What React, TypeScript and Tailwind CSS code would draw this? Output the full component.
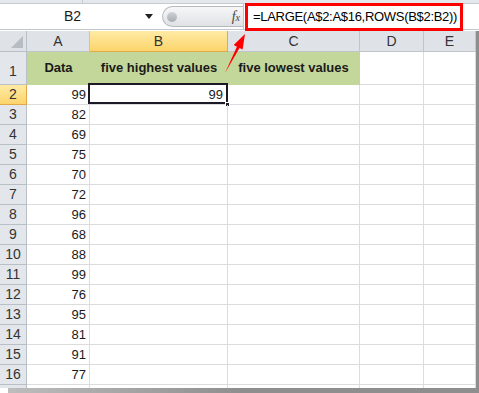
import React from 'react';

const values = [99, 82, 69, 75, 70, 72, 96, 68, 88, 99, 76, 95, 81, 91, 77];

const cols = ['A', 'B', 'C', 'D', 'E'];

const App: React.FC = () => {
  return (
    <div className="relative w-[479px] h-[393px] overflow-hidden bg-white font-['Liberation_Sans',Arial,sans-serif] text-[13px] text-[#1a1a1a]">
      {/* ribbon edge */}
      <div className="h-[4px] bg-[#e4e7eb] border-b border-[#c6cbd1] flex">
        <div className="w-[83px] border-r border-[#c6cbd1]"></div>
      </div>

      {/* Formula bar */}
      <div className="h-[26px] flex border-b border-[#c3c7cc]">
        <div className="w-[162px] flex items-center bg-white">
          <div className="w-[145px] text-center text-[14px]">B2</div>
          <div className="w-0 h-0 border-l-[4px] border-r-[4px] border-t-[5px] border-l-transparent border-r-transparent border-t-[#222]"></div>
        </div>
        <div className="w-[81px] my-[2px] flex items-center rounded-l-full border border-r-0 border-[#b6bac0] bg-gradient-to-b from-[#f7f7f8] to-[#dfe1e4]">
          <div className="ml-[4px] w-[10px] h-[10px] rounded-full bg-gradient-to-b from-[#cfd2d6] to-[#a9adb3]"></div>
          <div className="ml-auto mr-[3px] font-['Liberation_Serif',serif] italic text-[#444] text-[14px] leading-none">
            f<span className="text-[10px]">x</span>
          </div>
        </div>
        <div className="flex-1 flex items-center pl-[9px] border-l border-[#c3c7cc] text-[13px] tracking-[-0.3px] text-black">
          =LARGE(A$2:A$16,ROWS(B$2:B2))
        </div>
      </div>
      <div className="h-[1px] bg-white"></div>

      {/* Sheet */}
      <div className="flex h-[357px]">
        <div className="w-[476px] overflow-hidden">
          <div className="grid grid-cols-[27px_63px_138px_132px_64px_52px]">
            {/* column headers */}
            <div className="h-[21px] bg-[#dfe3e8] border-r border-b border-[#b9bfc7] flex items-end justify-end pr-[3px] pb-[3px]">
              <svg width="12" height="12" viewBox="0 0 12 12">
                <polygon points="12,0 12,12 0,12" fill="#b7bcc2" />
              </svg>
            </div>
            {cols.map((c) => (
              <div
                key={c}
                className={
                  c === 'B'
                    ? 'h-[21px] flex items-center justify-center bg-gradient-to-b from-[#ffeba4] to-[#fbd46a] border-r border-b border-[#e1a94a] text-[#333] text-[14px]'
                    : 'h-[21px] flex items-center justify-center bg-[#dfe3e8] border-r border-b border-[#c0c5cc] text-[#333] text-[14px]'
                }
              >
                {c}
              </div>
            ))}

            {/* row 1 */}
            <div className="h-[33px] bg-[#e3e6ea] border-r border-b border-[#b9bfc7] flex items-end justify-center pb-[2px] text-[#333] text-[14px]">1</div>
            <div className="h-[33px] bg-[#c4d79b] border-b border-[#c4d79b] flex items-center justify-center font-bold">Data</div>
            <div className="h-[33px] bg-[#c4d79b] border-b border-[#c4d79b] flex items-center justify-center font-bold">five highest values</div>
            <div className="h-[33px] bg-[#c4d79b] border-r border-b border-[#c4d79b] flex items-center justify-center font-bold">five lowest values</div>
            <div className="h-[33px] border-r border-b border-[#dadcdd]"></div>
            <div className="h-[33px] border-r border-b border-[#dadcdd]"></div>

            {values.map((v, i) => {
              const row = i + 2;
              return (
                <React.Fragment key={row}>
                  <div
                    className={
                      row === 2
                        ? 'h-[20px] flex items-center justify-center bg-gradient-to-b from-[#ffeba4] to-[#fbd46a] border-r border-b border-[#e1a94a] text-[#333] text-[14px]'
                        : 'h-[20px] flex items-center justify-center bg-[#e3e6ea] border-r border-b border-[#b9bfc7] text-[#333] text-[14px]'
                    }
                  >
                    {row}
                  </div>
                  <div className="h-[20px] flex items-center justify-end pr-[3px] border-r border-b border-[#dadcdd]">{v}</div>
                  <div className="h-[20px] relative flex items-center justify-end pr-[4px] border-r border-b border-[#dadcdd]">
                    {row === 2 && (
                      <>
                        99
                        <div className="absolute -left-[2px] -top-[2px] -right-[1px] bottom-0 border-2 border-[#1c1a26]"></div>
                        <div className="absolute -right-[3px] -bottom-[3px] w-[5px] h-[5px] bg-[#1c1a26] border border-white"></div>
                      </>
                    )}
                  </div>
                  <div className="h-[20px] border-r border-b border-[#dadcdd]"></div>
                  <div className="h-[20px] border-r border-b border-[#dadcdd]"></div>
                  <div className="h-[20px] border-r border-b border-[#dadcdd]"></div>
                </React.Fragment>
              );
            })}
            <div className="h-[20px] bg-[#e3e6ea] border-r border-[#b9bfc7]"></div>
            <div className="h-[20px] border-r border-[#dadcdd]"></div>
            <div className="h-[20px] border-r border-[#dadcdd]"></div>
            <div className="h-[20px] border-r border-[#dadcdd]"></div>
            <div className="h-[20px] border-r border-[#dadcdd]"></div>
            <div className="h-[20px] border-r border-[#dadcdd]"></div>
          </div>
        </div>
        <div className="w-[3px] bg-[#8e8e8e]"></div>
      </div>
      <div className="h-[5px] ml-[8px] bg-gradient-to-r from-[#bdbdbd] via-[#8e8e8e] to-[#8e8e8e]"></div>

      {/* annotation: red box */}
      <div className="absolute left-[245px] top-[3px] w-[218px] h-[28px] border-[3px] border-[#ff0000]"></div>

      {/* annotation: arrow */}
      <svg className="absolute left-0 top-0" width="479" height="393" viewBox="0 0 479 393">
        <polygon
          points="225,73 239.5,48.1 242.6,49.6 245,34 233.7,45.1 236.9,46.7"
          fill="#ff0000"
        />
      </svg>
    </div>
  );
};

export default App;
